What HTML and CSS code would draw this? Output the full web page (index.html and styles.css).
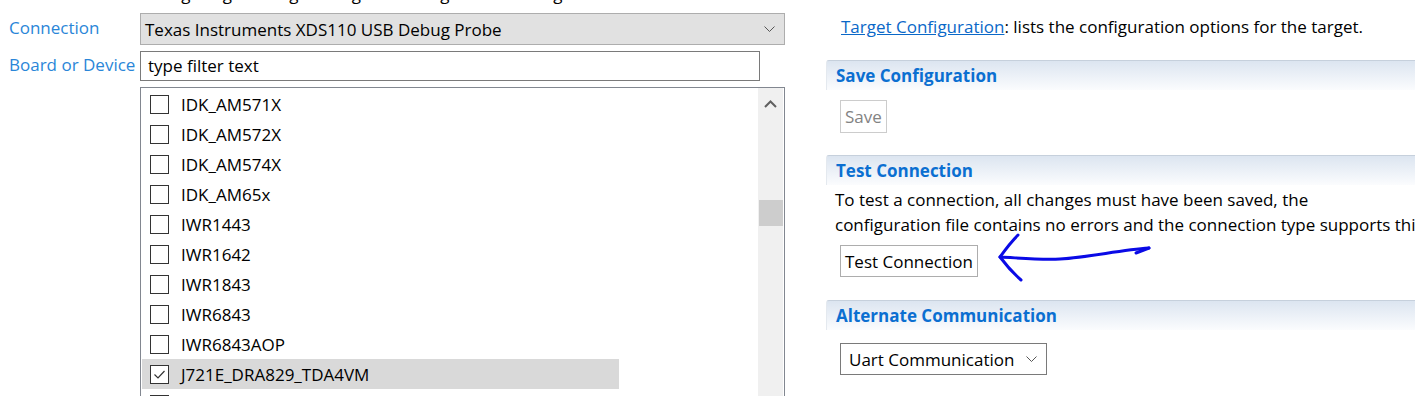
FILE: index.html
```html
<!DOCTYPE html>
<html lang="en">
<head>
  <meta charset="UTF-8">
  <title>Target Configuration</title>
  <link rel="stylesheet" href="styles.css">
</head>
<body>
  <div class="screen">
    <!-- lado esquerdo: conexao e lista de placas -->
    <div class="left">
      <div class="cut-line">Configuring the target using the settings in this configuration</div>
      <div class="form-grid">
        <label class="field-label">Connection</label>
        <div class="combo">
          <span>Texas Instruments XDS110 USB Debug Probe</span>
          <svg class="chev" width="11" height="7" viewBox="0 0 11 7"><polyline points="0.5,0.5 5.5,5.5 10.5,0.5" fill="none" stroke="#555" stroke-width="1"/></svg>
        </div>

        <label class="field-label">Board or Device</label>
        <div class="filter">type filter text</div>

        <div></div>
        <div class="list">
          <div class="rows">
            <div class="row"><span class="check"></span>IDK_AM571X</div>
            <div class="row"><span class="check"></span>IDK_AM572X</div>
            <div class="row"><span class="check"></span>IDK_AM574X</div>
            <div class="row"><span class="check"></span>IDK_AM65x</div>
            <div class="row"><span class="check"></span>IWR1443</div>
            <div class="row"><span class="check"></span>IWR1642</div>
            <div class="row"><span class="check"></span>IWR1843</div>
            <div class="row"><span class="check"></span>IWR6843</div>
            <div class="row"><span class="check"></span>IWR6843AOP</div>
            <div class="row selected">
              <span class="check">
                <svg width="17" height="17" viewBox="0 0 17 17"><polyline points="3.5,8.5 7,12 13.5,5" fill="none" stroke="#333" stroke-width="1.2"/></svg>
              </span>J721E_DRA829_TDA4VM
            </div>
            <div class="row"><span class="check"></span>J721E_EVM</div>
          </div>
          <div class="scrollbar">
            <svg class="up" width="13" height="8" viewBox="0 0 13 8"><polyline points="1,7 6.5,1.5 12,7" fill="none" stroke="#606060" stroke-width="2"/></svg>
            <div class="thumb"></div>
          </div>
        </div>
      </div>
    </div>

    <!-- lado direito: secoes -->
    <div class="right">
      <p class="intro"><a href="#">Target Configuration</a>: lists the configuration options for the target.</p>

      <div class="section-head">Save Configuration</div>
      <div class="section-body first">
        <button class="btn disabled">Save</button>
      </div>

      <div class="section-head">Test Connection</div>
      <div class="section-body middle">
        <p class="desc">To test a connection, all changes must have been saved, the<br>configuration file contains no errors and the connection type supports this function.</p>
        <button class="btn">Test Connection</button>
      </div>

      <div class="section-head">Alternate Communication</div>
      <div class="section-body last">
        <div class="combo small">
          <span>Uart Communication</span>
          <svg class="chev" width="11" height="7" viewBox="0 0 11 7"><polyline points="0.5,0.5 5.5,5.5 10.5,0.5" fill="none" stroke="#555" stroke-width="1"/></svg>
        </div>
      </div>
    </div>

    <!-- seta desenhada a mao -->
    <svg class="arrow" width="1415" height="396" viewBox="0 0 1415 396">
      <path d="M1149 248 C1120 250 1090 257 1060 259 C1040 260 1020 258 1000 257" fill="none" stroke="#0a0ae6" stroke-width="3" stroke-linecap="round"/>
      <path d="M1136 253 L1149 248" fill="none" stroke="#0a0ae6" stroke-width="3" stroke-linecap="round"/>
      <path d="M1018 235 C1011 242 1005 250 1000 257 C1006 265 1013 273 1021 280" fill="none" stroke="#0a0ae6" stroke-width="3" stroke-linecap="round"/>
    </svg>
  </div>
</body>
</html>
```

FILE: styles.css
```css
body {
  margin: 0;
  background: #fff;
  font-family: "Open Sans", "Noto Sans", sans-serif;
  font-size: 17px;
  color: #000;
}

.screen {
  position: relative;
  width: 1415px;
  height: 396px;
  overflow: hidden;
  display: flex;
}

.left {
  width: 826px;
  flex-shrink: 0;
}

.cut-line {
  height: 20px;
  line-height: 20px;
  margin: -16px 0 9px 140px;
  white-space: nowrap;
}

.form-grid {
  display: grid;
  grid-template-columns: 140px 645px;
  row-gap: 6px;
}

.field-label {
  color: #2a86d8;
  padding-left: 9px;
  align-self: center;
  white-space: nowrap;
  margin-top: -3px;
}

.combo {
  height: 30px;
  border: 1px solid #adadad;
  background: #e1e1e1;
  display: flex;
  align-items: center;
  justify-content: space-between;
  padding: 0 9px 0 4px;
}

.combo.small {
  width: 188px;
  background: #fff;
  border-color: #7a7a7a;
  padding: 0 9px 0 8px;
}

.filter {
  width: 611px;
  height: 28px;
  line-height: 28px;
  border: 1px solid #7a7a7a;
  padding-left: 7px;
}

.list {
  height: 330px;
  border: 1px solid #828790;
  display: flex;
}

.rows {
  flex: 1;
  padding-top: 1px;
}

.row {
  width: 469px;
  height: 30px;
  margin-left: 1px;
  padding-left: 8px;
  display: flex;
  align-items: center;
}

.row.selected {
  background: #d9d9d9;
}

.check {
  width: 17px;
  height: 17px;
  border: 1px solid #333;
  margin-right: 12px;
  background: #fff;
  display: flex;
}

.scrollbar {
  width: 25px;
  margin-right: 1px;
  background: #f0f0f0;
  display: flex;
  flex-direction: column;
  align-items: center;
}

.scrollbar .up {
  margin-top: 12px;
}

.thumb {
  width: 24px;
  height: 26px;
  background: #cdcdcd;
  margin-top: 92px;
}

.right {
  flex: 1;
  padding-top: 15px;
}

.intro {
  margin: 0 0 22px 15px;
  line-height: 23px;
  white-space: nowrap;
}

.intro a {
  color: #0a68c8;
}

.section-head {
  height: 29px;
  line-height: 29px;
  border-top: 1px solid #c6d0dc;
  border-left: 1px solid #e4e9ef;
  border-top-left-radius: 3px;
  background: linear-gradient(#dce5f0, #fbfcfe);
  color: #0b6fd1;
  font-weight: 700;
  padding-left: 9px;
}

.section-body {
  padding-left: 14px;
}

.section-body.first {
  padding-top: 10px;
  padding-bottom: 22px;
}

.section-body.middle {
  padding-top: 2px;
  padding-bottom: 23px;
}

.section-body.last {
  padding-top: 13px;
}

.section-body .desc {
  margin: 0 0 8px -5px;
  line-height: 25px;
  white-space: nowrap;
}

.btn {
  font-family: inherit;
  font-size: 17px;
  background: #fff;
  border: 1px solid #adadad;
  height: 32px;
  padding: 0 4px;
  color: #000;
}

.btn.disabled {
  height: 33px;
  border-color: #cccccc;
  color: #838383;
}

.arrow {
  position: absolute;
  left: 0;
  top: 0;
  pointer-events: none;
}
```
